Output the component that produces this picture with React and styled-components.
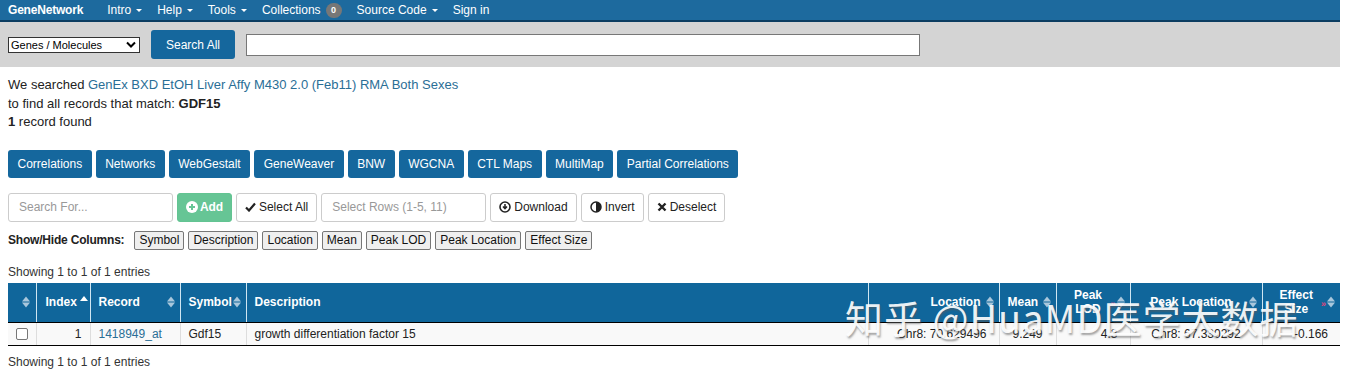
import React from "react";
import styled, { createGlobalStyle } from "styled-components";

const Global = createGlobalStyle`
  html, body { margin: 0; padding: 0; background: #fff; overflow: hidden; }
  body { font-family: "Liberation Sans", Arial, sans-serif; font-size: 12px; color: #222; }
`;

const Page = styled.div`
  width: 1340px;
  position: relative;
`;

const Nav = styled.nav`
  height: 20px;
  background: #1d6a9e;
  border-bottom: 2px solid #0b3d61;
  display: flex;
  align-items: center;
  padding-left: 8px;
  gap: 15px;
  color: #fff;
  font-size: 12px;
`;

const Brand = styled.span`
  font-weight: bold;
  letter-spacing: -0.2px;
  margin-right: 9px;
`;

const NavItem = styled.span`
  display: inline-flex;
  align-items: center;
  gap: 4px;
`;

const Caret = styled.span`
  display: inline-block;
  width: 0;
  height: 0;
  border-left: 3px solid transparent;
  border-right: 3px solid transparent;
  border-top: 3px solid #fff;
  margin-left: 1px;
`;

const Badge = styled.span`
  display: inline-flex;
  align-items: center;
  justify-content: center;
  min-width: 16px;
  height: 15px;
  border-radius: 8px;
  background: #777;
  font-size: 9px;
  font-weight: bold;
  margin-left: 1px;
`;

const SearchBar = styled.div`
  height: 45px;
  background: #d4d4d4;
  display: flex;
  align-items: center;
  padding-left: 8px;
`;

const Select = styled.div`
  width: 125px;
  height: 14px;
  border: 1px solid #333;
  background: #fff;
  font-size: 11px;
  display: flex;
  align-items: center;
  justify-content: space-between;
  padding: 0 3px 0 2px;
  box-sizing: content-box;
  margin-right: 11px;
  color: #000;
`;

const BlueBtn = styled.div`
  background: #15679d;
  color: #fff;
  border-radius: 3px;
  height: ${(p) => p.$h || 28}px;
  padding: 0 ${(p) => p.$px || 9.5}px;
  display: inline-flex;
  align-items: center;
  font-size: 12px;
  box-sizing: border-box;
`;

const MainInput = styled.div`
  width: 672px;
  height: 20px;
  background: #fff;
  border: 1px solid #777;
  margin-left: 11px;
`;

const Info = styled.div`
  padding: 9px 8px 0;
  font-size: 13px;
  line-height: 18.5px;
  color: #222;
`;

const Link = styled.span`
  color: #2a6e96;
`;

const BtnRow = styled.div`
  display: flex;
  gap: 4px;
  padding: 18px 8px 0;
`;

const Toolbar = styled.div`
  display: flex;
  align-items: center;
  gap: 4px;
  padding: 15px 8px 0;
`;

const TextBox = styled.div`
  width: ${(p) => p.$w}px;
  height: 29px;
  border: 1px solid #ccc;
  border-radius: 3px;
  box-sizing: border-box;
  color: #999;
  display: flex;
  align-items: center;
  padding-left: 10px;
  font-size: 12px;
  background: #fff;
`;

const ToolBtn = styled.div`
  height: 29px;
  box-sizing: border-box;
  border: 1px solid ${(p) => (p.$green ? "#63c492" : "#ccc")};
  background: ${(p) => (p.$green ? "#66c595" : "#fff")};
  color: ${(p) => (p.$green ? "#fff" : "#222")};
  font-weight: ${(p) => (p.$green ? "bold" : "normal")};
  border-radius: 3px;
  display: inline-flex;
  align-items: center;
  gap: ${(p) => (p.$green ? 2 : 3)}px;
  padding: 0 ${(p) => p.$px || 8}px;
  font-size: 12px;
  letter-spacing: ${(p) => (p.$green ? "-0.15px" : "0")};
`;

const ColsRow = styled.div`
  display: flex;
  align-items: center;
  gap: 4px;
  padding: 9px 8px 0;
`;

const ColsLabel = styled.span`
  font-weight: bold;
  margin-right: 6px;
  font-size: 12px;
  letter-spacing: -0.2px;
`;

const ColBtn = styled.div`
  height: 19px;
  box-sizing: border-box;
  border: 1px solid #777;
  background: #efefef;
  border-radius: 2px;
  padding: 0 4px;
  display: inline-flex;
  align-items: center;
  font-size: 12px;
  color: #111;
`;

const Showing = styled.div`
  padding: ${(p) => p.$top}px 8px 0;
  font-size: 12px;
  color: #333;
`;

const TableWrap = styled.div`
  padding: 4px 0 0 8px;
`;

const Table = styled.table`
  width: 1332px;
  border-collapse: collapse;
  table-layout: fixed;
  font-size: 12px;
`;

const Th = styled.th`
  background: #10669b;
  color: #fff;
  font-weight: bold;
  height: 39px;
  padding: 0 ${(p) => (p.$pr != null ? p.$pr : p.$sort ? 18 : 8)}px 0 ${(p) => p.$pl ?? 8}px;
  border-left: 1px solid #cfe6f2;
  border-bottom: 1px solid #000;
  text-align: ${(p) => p.$align || "left"};
  position: relative;
  line-height: 14px;
  white-space: ${(p) => (p.$nowrap ? "nowrap" : "normal")};
  &:first-child { border-left: none; }
`;

const Td = styled.td`
  background: #f9f9f9;
  height: 22px;
  padding: 0 ${(p) => p.$pr ?? 8}px 0 ${(p) => p.$pl ?? 8}px;
  border-left: 1px solid #ddd;
  border-bottom: 1px solid #000;
  text-align: ${(p) => p.$align || "left"};
  color: ${(p) => (p.$link ? "#2a6e96" : "#222")};
  &:first-child { border-left: none; }
`;

const SortIcon = styled.span`
  position: absolute;
  right: ${(p) => p.$r ?? 5}px;
  top: 50%;
  transform: translateY(-50%);
  display: flex;
  flex-direction: column;
  gap: 1px;
`;

const InlineUp = styled.span`
  display: inline-block;
  width: 0;
  height: 0;
  border-left: 4px solid transparent;
  border-right: 4px solid transparent;
  border-bottom: 5px solid #fff;
  margin-left: 3px;
  vertical-align: 5px;
`;

const Tri = styled.span`
  width: 0;
  height: 0;
  border-left: 4px solid transparent;
  border-right: 4px solid transparent;
  ${(p) => (p.$up ? "border-bottom" : "border-top")}: 5px solid #a9c7dc;
`;

const Star = styled.span`
  color: #e0457b;
  font-size: 9px;
  position: absolute;
  right: 14px;
  top: 14px;
`;

const Check = styled.span`
  display: inline-block;
  width: 10px;
  height: 10px;
  border: 1px solid #777;
  border-radius: 2px;
  background: #fff;
  vertical-align: middle;
`;

const Watermark = styled.div`
  position: absolute;
  left: 845px;
  top: 289px;
  font-family: "Noto Sans CJK SC", "Liberation Sans", sans-serif;
  font-size: 38px;
  color: rgba(255, 255, 255, 0.92);
  text-shadow: 1px 2px 2px rgba(90, 90, 90, 0.55);
  white-space: nowrap;
  letter-spacing: 1px;
  pointer-events: none;
`;

const Sort = ({ r }) => (
  <SortIcon $r={r}>
    <Tri $up />
    <Tri />
  </SortIcon>
);

const PlusCircle = () => (
  <svg width="12" height="12" viewBox="0 0 12 12">
    <circle cx="6" cy="6" r="6" fill="#fff" />
    <path d="M6 3v6M3 6h6" stroke="#66c595" strokeWidth="2" />
  </svg>
);

const CheckMark = () => (
  <svg width="11" height="10" viewBox="0 0 11 10">
    <path d="M1 5.5l3 3L10 1.5" stroke="#222" strokeWidth="2.2" fill="none" />
  </svg>
);

const DownloadIcon = () => (
  <svg width="12" height="12" viewBox="0 0 12 12">
    <circle cx="6" cy="6" r="5" stroke="#222" strokeWidth="1.6" fill="none" />
    <path d="M6 3v4.5M4 5.5l2 2.2 2-2.2" stroke="#222" strokeWidth="1.5" fill="none" />
  </svg>
);

const InvertIcon = () => (
  <svg width="12" height="12" viewBox="0 0 12 12">
    <circle cx="6" cy="6" r="5" stroke="#222" strokeWidth="1.5" fill="none" />
    <path d="M6 1a5 5 0 0 1 0 10z" fill="#222" />
  </svg>
);

const XIcon = () => (
  <svg width="10" height="10" viewBox="0 0 10 10">
    <path d="M1.5 1.5l7 7M8.5 1.5l-7 7" stroke="#222" strokeWidth="2.4" />
  </svg>
);

const ChevronDown = () => (
  <svg width="10" height="7" viewBox="0 0 10 7">
    <path d="M1 1.5l4 4 4-4" stroke="#000" strokeWidth="2" fill="none" />
  </svg>
);

const tools = [
  "Correlations",
  "Networks",
  "WebGestalt",
  "GeneWeaver",
  "BNW",
  "WGCNA",
  "CTL Maps",
  "MultiMap",
  "Partial Correlations",
];

const cols = ["Symbol", "Description", "Location", "Mean", "Peak LOD", "Peak Location", "Effect Size"];

export default function App() {
  return (
    <Page>
      <Global />
      <Nav>
        <Brand>GeneNetwork</Brand>
        <NavItem>Intro <Caret /></NavItem>
        <NavItem>Help <Caret /></NavItem>
        <NavItem>Tools <Caret /></NavItem>
        <NavItem>Collections <Badge>0</Badge></NavItem>
        <NavItem>Source Code <Caret /></NavItem>
        <NavItem>Sign in</NavItem>
      </Nav>
      <SearchBar>
        <Select>
          <span>Genes / Molecules</span>
          <ChevronDown />
        </Select>
        <BlueBtn $h={29} $px={15}>Search All</BlueBtn>
        <MainInput />
      </SearchBar>
      <Info>
        <div>
          We searched <Link>GenEx BXD EtOH Liver Affy M430 2.0 (Feb11) RMA Both Sexes</Link>
        </div>
        <div>
          to find all records that match: <b>GDF15</b>
        </div>
        <div>
          <b>1</b> record found
        </div>
      </Info>
      <BtnRow>
        {tools.map((t) => (
          <BlueBtn key={t}>{t}</BlueBtn>
        ))}
      </BtnRow>
      <Toolbar>
        <TextBox $w={165}>Search For...</TextBox>
        <ToolBtn $green $px={8}>
          <PlusCircle />
          Add
        </ToolBtn>
        <ToolBtn>
          <CheckMark />
          Select All
        </ToolBtn>
        <TextBox $w={165}>Select Rows (1-5, 11)</TextBox>
        <ToolBtn>
          <DownloadIcon />
          Download
        </ToolBtn>
        <ToolBtn>
          <InvertIcon />
          Invert
        </ToolBtn>
        <ToolBtn>
          <XIcon />
          Deselect
        </ToolBtn>
      </Toolbar>
      <ColsRow>
        <ColsLabel>Show/Hide Columns:</ColsLabel>
        {cols.map((c) => (
          <ColBtn key={c}>{c}</ColBtn>
        ))}
      </ColsRow>
      <Showing $top={15}>Showing 1 to 1 of 1 entries</Showing>
      <TableWrap>
        <Table>
          <colgroup>
            <col style={{ width: 28 }} />
            <col style={{ width: 54 }} />
            <col style={{ width: 90 }} />
            <col style={{ width: 66 }} />
            <col style={{ width: 622 }} />
            <col style={{ width: 131 }} />
            <col style={{ width: 57 }} />
            <col style={{ width: 74 }} />
            <col style={{ width: 132 }} />
            <col style={{ width: 78 }} />
          </colgroup>
          <thead>
            <tr>
              <Th $sort><Sort r={6} /></Th>
              <Th $nowrap $pl={9} $pr={0}>Index<InlineUp /></Th>
              <Th $sort>Record<Sort r={5} /></Th>
              <Th $sort>Symbol<Sort r={5} /></Th>
              <Th>Description</Th>
              <Th $sort $align="right">Location<Sort r={5} /></Th>
              <Th $sort $align="center">Mean<Sort r={5} /></Th>
              <Th $sort $align="center">Peak<br />LOD<Star>»</Star><Sort r={5} /></Th>
              <Th $sort $align="center">Peak Location<Sort r={5} /></Th>
              <Th $sort $align="center">Effect<br />Size<Star>»</Star><Sort r={5} /></Th>
            </tr>
          </thead>
          <tbody>
            <tr>
              <Td $align="center" $pl={0} $pr={0}><Check /></Td>
              <Td $align="right">1</Td>
              <Td $link>1418949_at</Td>
              <Td>Gdf15</Td>
              <Td>growth differentiation factor 15</Td>
              <Td $align="right" $pr={12}>Chr8: 70.629496</Td>
              <Td $align="center">9.249</Td>
              <Td $align="right" $pr={12}>4.3</Td>
              <Td $align="center">Chr8: 67.330292</Td>
              <Td $align="right" $pr={12}>-0.166</Td>
            </tr>
          </tbody>
        </Table>
      </TableWrap>
      <Showing $top={9}>Showing 1 to 1 of 1 entries</Showing>
      <Watermark>知乎 @HuaMD医学大数据</Watermark>
    </Page>
  );
}
